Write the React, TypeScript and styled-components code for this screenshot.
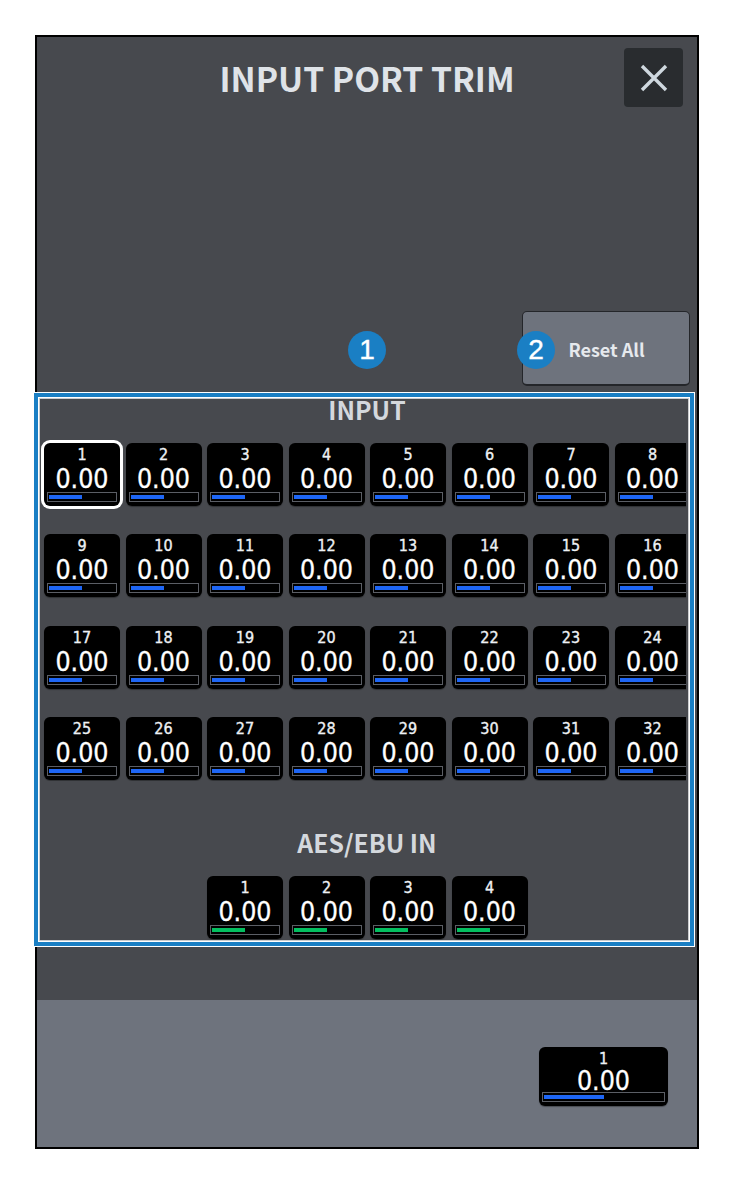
import React from 'react';
import styled, { createGlobalStyle } from 'styled-components';

const Global = createGlobalStyle`
  html, body { margin: 0; padding: 0; background: #fff; }
  body { width: 734px; height: 1184px; overflow: hidden; font-family: "Noto Sans CJK JP", "Noto Sans", sans-serif; }
`;
const Page = styled.div`
  position: relative;
  width: 734px;
  height: 1184px;
  padding: 35px;
  box-sizing: border-box;
`;
const Frame = styled.div`
  width: 664px;
  height: 1114px;
  box-sizing: border-box;
  border: 2px solid #000;
  display: flex;
  flex-direction: column;
`;
const Main = styled.main`
  flex: 1;
  min-height: 0;
  background: #47494e;
  display: flex;
  flex-direction: column;
`;
const Header = styled.header`
  height: 358px;
  flex: none;
  position: relative;
  padding: 11px 14px 0 0;
  box-sizing: border-box;
  display: flex;
  flex-direction: column;
  align-items: flex-end;
`;
const Title = styled.h1`
  position: absolute;
  left: 0;
  right: 0;
  top: 16px;
  margin: 0;
  text-align: center;
  font-size: 33.6px;
  line-height: 50px;
  font-weight: 700;
  color: #dfe3e8;
`;
const Close = styled.button`
  width: 59px;
  height: 59px;
  flex: none;
  padding: 0;
  border: 0;
  border-radius: 4px;
  background: #292c2f;
  display: flex;
  align-items: center;
  justify-content: center;
`;
const Reset = styled.button`
  width: 168px;
  height: 75px;
  margin: 204px -7px 0 0;
  flex: none;
  box-sizing: border-box;
  border: 1px solid #24262a;
  border-bottom-width: 2px;
  border-radius: 5px;
  background: #6e737d;
  color: #e6e9ed;
  font: 700 18px "Noto Sans CJK JP", "Noto Sans", sans-serif;
  padding: 2px 0 0 1px;
`;
const Groups = styled.section`
  width: 649px;
  flex: none;
  padding-top: 2px;
  box-sizing: border-box;
`;
const GroupLabel = styled.h2<{ $gap?: number }>`
  margin: ${p => p.$gap ?? 0}px 0 0;
  text-align: center;
  font-size: 24.8px;
  line-height: 24px;
  font-weight: 700;
  color: #d4d8dd;
  padding-left: 11px;
`;
const GridViewport = styled.div`
  overflow: hidden;
  margin-top: 19px;
  padding: 3px 0 1px 7px;
`;
const Grid = styled.div`
  display: grid;
  grid-template-columns: repeat(8, 76px);
  column-gap: 5.5px;
  row-gap: 28.4px;
  width: 680px;
`;
const Aes = styled.div`
  display: flex;
  gap: 5.5px;
  margin: 22px 0 0 170px;
`;
const Tile = styled.div<{ $selected?: boolean }>`
  position: relative;
  width: 76px;
  height: 63px;
  flex: none;
  box-sizing: border-box;
  background: #000;
  border-radius: 6px;
  padding: 4px 3px 0;
  color: #fff;
  font-family: "DejaVu Sans", sans-serif;
  font-stretch: condensed;
  text-align: center;
  box-shadow: ${p => (p.$selected ? '0 0 0 3px #fff' : '0 1px 1px rgba(0,0,0,0.35)')};
`;
const Num = styled.div`
  font-size: 16px;
  line-height: 16px;
  color: #eef1f4;
  -webkit-text-stroke: 0.35px #eef1f4;
`;
const Val = styled.div`
  font-size: 26.5px;
  height: 29px;
  padding-top: 2px;
  box-sizing: border-box;
  line-height: 27px;
  color: #fff;
  -webkit-text-stroke: 0.3px #fff;
`;
const Meter = styled.div`
  height: 10px;
  box-sizing: border-box;
  border: 1px solid #5b5e65;
  padding: 2px 1px;
  background: #000;
`;
const Fill = styled.div<{ $color: string }>`
  height: 100%;
  background: ${p => p.$color};
`;
const Footer = styled.footer`
  height: 147px;
  flex: none;
  background: #6e737d;
  display: flex;
  justify-content: flex-end;
  padding: 47px 29px 0 0;
  box-sizing: border-box;
`;
const WideTile = styled(Tile)`
  width: 129px;
  height: 59px;
`;
const WideVal = styled(Val)`
  height: 25px;
  padding-top: 3px;
  line-height: 22px;
`;
const Callout = styled.div`
  position: absolute;
  left: 33px;
  top: 392px;
  width: 662px;
  height: 555px;
  box-sizing: border-box;
  border: 1px solid #fff;
  box-shadow: inset 0 0 0 4px #1a7fc4, inset 0 0 0 5px #fff, inset 0 0 0 6px #c9cbce;
  pointer-events: none;
`;
const Badge = styled.div<{ $x: number; $y: number }>`
  position: absolute;
  left: ${p => p.$x - 19}px;
  top: ${p => p.$y - 19}px;
  width: 38px;
  height: 38px;
  border-radius: 50%;
  background: #1a7fc4;
  color: #fff;
  font: 400 28px/38px "Liberation Sans", sans-serif;
  -webkit-text-stroke: 0.4px #fff;
  text-align: center;
`;

const BLUE = '#1e66f5';
const GREEN = '#03bf60';

const Cell = ({ n, color, selected }: { n: number; color: string; selected?: boolean }) => (
  <Tile $selected={selected}>
    <Num>{n}</Num>
    <Val>0.00</Val>
    <Meter><Fill $color={color} style={{ width: '50%' }} /></Meter>
  </Tile>
);

export default function App() {
  return (
    <Page>
      <Global />
      <Frame>
        <Main>
          <Header>
            <Title>INPUT PORT TRIM</Title>
            <Close aria-label="Close">
              <svg width="28" height="28" viewBox="0 0 28 28">
                <path d="M2 2 L26 26 M26 2 L2 26" stroke="#cfd8df" strokeWidth="3.4" fill="none" />
              </svg>
            </Close>
            <Reset>Reset All</Reset>
          </Header>
          <Groups>
            <GroupLabel>INPUT</GroupLabel>
            <GridViewport>
              <Grid>
                {Array.from({ length: 32 }, (_, i) => (
                  <Cell key={i} n={i + 1} color={BLUE} selected={i === 0} />
                ))}
              </Grid>
            </GridViewport>
            <GroupLabel $gap={49}>AES/EBU IN</GroupLabel>
            <Aes>
              {[1, 2, 3, 4].map(n => <Cell key={n} n={n} color={GREEN} />)}
            </Aes>
          </Groups>
        </Main>
        <Footer>
          <WideTile>
            <Num>1</Num>
            <WideVal>0.00</WideVal>
            <Meter><Fill $color={BLUE} style={{ width: '50%' }} /></Meter>
          </WideTile>
        </Footer>
      </Frame>
      <Callout />
      <Badge $x={367} $y={350}>1</Badge>
      <Badge $x={536} $y={350}>2</Badge>
    </Page>
  );
}
